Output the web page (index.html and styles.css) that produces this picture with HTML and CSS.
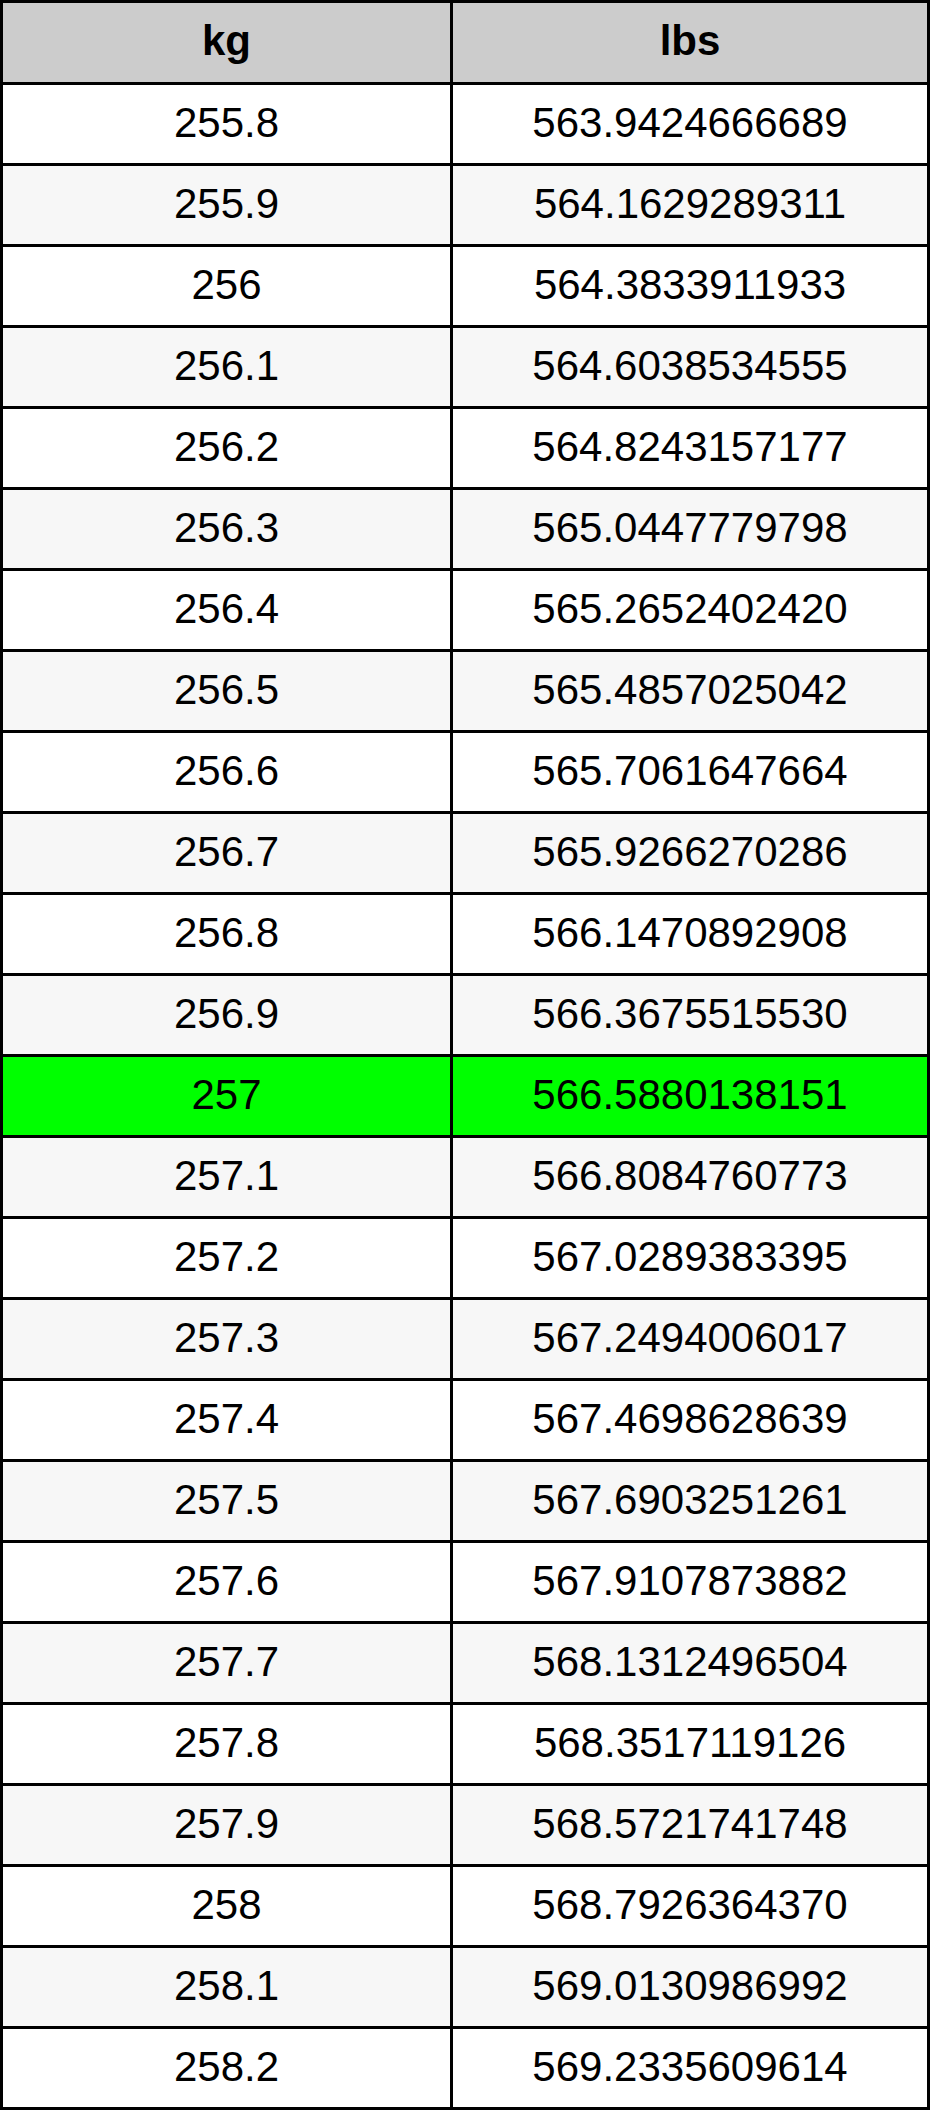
FILE: index.html
```html
<!DOCTYPE html>
<html>
<head>
<meta charset="utf-8">
<link rel="stylesheet" href="styles.css">
</head>
<body>
<table class="conv">
<thead>
<tr><th class="c-kg">kg</th><th class="c-lbs">lbs</th></tr>
</thead>
<tbody>
<tr><td>255.8</td><td>563.9424666689</td></tr>
<tr class="alt"><td>255.9</td><td>564.1629289311</td></tr>
<tr><td>256</td><td>564.3833911933</td></tr>
<tr class="alt"><td>256.1</td><td>564.6038534555</td></tr>
<tr><td>256.2</td><td>564.8243157177</td></tr>
<tr class="alt"><td>256.3</td><td>565.0447779798</td></tr>
<tr><td>256.4</td><td>565.2652402420</td></tr>
<tr class="alt"><td>256.5</td><td>565.4857025042</td></tr>
<tr><td>256.6</td><td>565.7061647664</td></tr>
<tr class="alt"><td>256.7</td><td>565.9266270286</td></tr>
<tr><td>256.8</td><td>566.1470892908</td></tr>
<tr class="alt"><td>256.9</td><td>566.3675515530</td></tr>
<tr class="hl"><td>257</td><td>566.5880138151</td></tr>
<tr class="alt"><td>257.1</td><td>566.8084760773</td></tr>
<tr><td>257.2</td><td>567.0289383395</td></tr>
<tr class="alt"><td>257.3</td><td>567.2494006017</td></tr>
<tr><td>257.4</td><td>567.4698628639</td></tr>
<tr class="alt"><td>257.5</td><td>567.6903251261</td></tr>
<tr><td>257.6</td><td>567.9107873882</td></tr>
<tr class="alt"><td>257.7</td><td>568.1312496504</td></tr>
<tr><td>257.8</td><td>568.3517119126</td></tr>
<tr class="alt"><td>257.9</td><td>568.5721741748</td></tr>
<tr><td>258</td><td>568.7926364370</td></tr>
<tr class="alt"><td>258.1</td><td>569.0130986992</td></tr>
<tr><td>258.2</td><td>569.2335609614</td></tr>
</tbody>
</table>
</body>
</html>
```

FILE: styles.css
```css
html, body {
  margin: 0;
  padding: 0;
  background: #ffffff;
}

.conv {
  border-collapse: separate;
  border-spacing: 0;
  border-top: 3px solid #000;
  border-left: 3px solid #000;
  font-family: "Liberation Sans", Arial, Helvetica, sans-serif;
  color: #000;
  table-layout: fixed;
}

.conv th,
.conv td {
  padding: 0;
  border-right: 3px solid #000;
  border-bottom: 3px solid #000;
  text-align: center;
  vertical-align: middle;
  font-size: 42px;
  line-height: 1;
  box-sizing: content-box;
}

.conv th {
  height: 75px;
  padding-bottom: 4px;
  background: #cccccc;
  font-weight: bold;
}

.conv td {
  height: 76px;
  padding-bottom: 2px;
  font-weight: normal;
  background: #ffffff;
}

.conv .c-kg {
  width: 447px;
}

.conv .c-lbs {
  width: 474px;
}

.conv tr.alt td {
  background: #f7f7f7;
}

.conv tr.hl td {
  background: #00ff00;
}
```
